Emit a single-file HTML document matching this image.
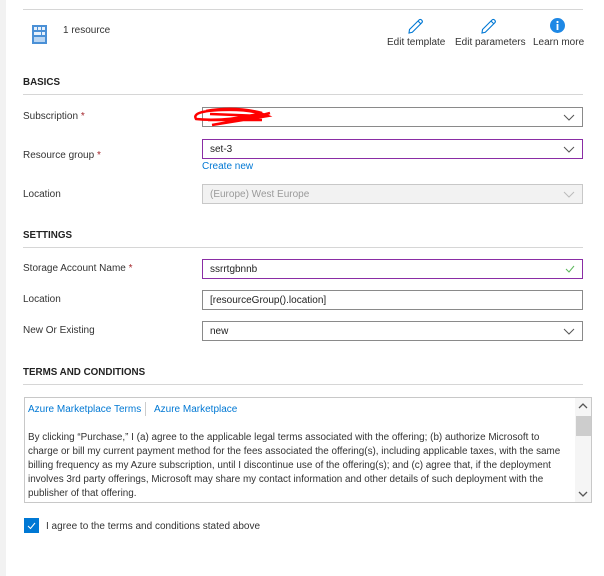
<!DOCTYPE html>
<html><head><style>
*{margin:0;padding:0;box-sizing:border-box}
body{width:604px;height:576px;background:#fff;font-family:"Liberation Sans",sans-serif;font-size:10px;color:#333;position:relative;overflow:hidden}
.a{position:absolute;white-space:nowrap}
.strip{left:0;top:0;width:6px;height:576px;background:#f2f2f2}
.hr{position:absolute;left:23px;width:560px;height:1px;background:#d6d6d6}
.h{font-weight:bold;font-size:9.8px;color:#222}
.inp{position:absolute;left:202px;width:381px;height:20px;border:1px solid #8a8a8a;background:#fff;padding:4px 7px;font-size:10px;color:#222}
.pur{border-color:#8a2da5}
.dis{background:#f2f2f2;border-color:#c8c8c8;color:#9a9a9a}
.chev{position:absolute;right:7px;top:4px}
.req{color:#a4262c}
.lnk{color:#0078d4}
</style></head><body>
<div class="a strip"></div>
<div class="hr" style="top:9px"></div>
<div class="a" style="left:32px;top:25px;width:15px;height:19px;background:#4a90d6"></div>
<div class="a" style="left:34px;top:27px;width:3px;height:3px;background:#e8f1fb"></div>
<div class="a" style="left:38px;top:27px;width:3px;height:3px;background:#e8f1fb"></div>
<div class="a" style="left:42px;top:27px;width:3px;height:3px;background:#e8f1fb"></div>
<div class="a" style="left:34px;top:32px;width:7px;height:3px;background:#e8f1fb"></div>
<div class="a" style="left:42px;top:32px;width:3px;height:3px;background:#e8f1fb"></div>
<div class="a" style="left:34px;top:37px;width:11px;height:5px;background:#b9d5f2"></div>
<div class="a" style="left:63px;top:25px">1 resource</div>
<svg class="a" style="left:406px;top:17px" width="18" height="18" viewBox="0 0 18 18"><path d="M3 16 L3.5 12.5 L13 3 Q14.5 1.8 15.8 3.2 Q17 4.5 15.8 5.8 L6.3 15.3 Z M12 4 L15 7" fill="none" stroke="#0078d4" stroke-width="1.1"/></svg>
<svg class="a" style="left:479px;top:17px" width="18" height="18" viewBox="0 0 18 18"><path d="M3 16 L3.5 12.5 L13 3 Q14.5 1.8 15.8 3.2 Q17 4.5 15.8 5.8 L6.3 15.3 Z M12 4 L15 7" fill="none" stroke="#0078d4" stroke-width="1.1"/></svg>
<svg class="a" style="left:550px;top:18px" width="15" height="15" viewBox="0 0 15 15"><circle cx="7.5" cy="7.5" r="7.5" fill="#1e88e5"/><rect x="6.6" y="6" width="1.8" height="6" fill="#fff"/><circle cx="7.5" cy="4" r="1.1" fill="#fff"/></svg>
<div class="a" style="left:387px;top:37px">Edit template</div>
<div class="a" style="left:455px;top:37px">Edit parameters</div>
<div class="a" style="left:533px;top:37px">Learn more</div>

<div class="a h" style="left:23px;top:77px">BASICS</div>
<div class="hr" style="top:94px"></div>
<div class="a" style="left:23px;top:111px">Subscription <span class="req">*</span></div>
<div class="inp" style="top:107px"><svg class="chev" width="12" height="10"><path d="M1 3 L6 8 L11 3" fill="none" stroke="#555" stroke-width="1"/></svg></div>
<svg class="a" style="left:190px;top:104px" width="86" height="26"><path d="M16 7 Q45 2 72 9 Q35 18 6 15 Q1 7 32 6 Q62 5 78 12 L22 21 Q62 14 80 9 M20 10 L70 12 M18 16 L72 16" fill="none" stroke="#f00" stroke-width="2.5"/></svg>
<div class="a" style="left:23px;top:150px">Resource group <span class="req">*</span></div>
<div class="inp pur" style="top:139px">set-3<svg class="chev" width="12" height="10"><path d="M1 3 L6 8 L11 3" fill="none" stroke="#555" stroke-width="1"/></svg></div>
<div class="a lnk" style="left:202px;top:161px">Create new</div>
<div class="a" style="left:23px;top:189px">Location</div>
<div class="inp dis" style="top:184px">(Europe) West Europe<svg class="chev" width="12" height="10"><path d="M1 3 L6 8 L11 3" fill="none" stroke="#bbb" stroke-width="1"/></svg></div>

<div class="a h" style="left:23px;top:230px">SETTINGS</div>
<div class="hr" style="top:247px"></div>
<div class="a" style="left:23px;top:263px">Storage Account Name <span class="req">*</span></div>
<div class="inp pur" style="top:259px">ssrrtgbnnb<svg class="chev" width="10" height="10"><path d="M1 5 L4 8 L9 2" fill="none" stroke="#5bb85b" stroke-width="1"/></svg></div>
<div class="a" style="left:23px;top:294px">Location</div>
<div class="inp" style="top:290px">[resourceGroup().location]</div>
<div class="a" style="left:23px;top:325px">New Or Existing</div>
<div class="inp" style="top:321px">new<svg class="chev" width="12" height="10"><path d="M1 3 L6 8 L11 3" fill="none" stroke="#555" stroke-width="1"/></svg></div>

<div class="a h" style="left:23px;top:367px">TERMS AND CONDITIONS</div>
<div class="hr" style="top:384px"></div>
<div class="a" style="left:24px;top:397px;width:568px;height:106px;border:1px solid #c8c8c8"></div>
<div class="a lnk" style="left:28px;top:404px">Azure Marketplace Terms</div>
<div class="a" style="left:145px;top:402px;width:1px;height:14px;background:#ccc"></div>
<div class="a lnk" style="left:154px;top:404px">Azure Marketplace</div>
<div class="a" style="left:28px;top:431px;width:543px;white-space:normal;line-height:14px;font-size:9.9px">By clicking “Purchase,” I (a) agree to the applicable legal terms associated with the offering; (b) authorize Microsoft to charge or bill my current payment method for the fees associated the offering(s), including applicable taxes, with the same billing frequency as my Azure subscription, until I discontinue use of the offering(s); and (c) agree that, if the deployment involves 3rd party offerings, Microsoft may share my contact information and other details of such deployment with the publisher of that offering.</div>
<div class="a" style="left:575px;top:398px;width:16px;height:104px;background:#f5f5f5"></div>
<div class="a" style="left:576px;top:416px;width:15px;height:20px;background:#cdcdcd"></div>
<svg class="a" style="left:578px;top:402px" width="10" height="8"><path d="M1 6 L5 2 L9 6" fill="none" stroke="#555" stroke-width="1.3"/></svg>
<svg class="a" style="left:578px;top:490px" width="10" height="8"><path d="M1 2 L5 6 L9 2" fill="none" stroke="#555" stroke-width="1.3"/></svg>

<div class="a" style="left:24px;top:518px;width:15px;height:15px;background:#0078d4"></div>
<svg class="a" style="left:27px;top:521px" width="9" height="9"><path d="M1 5 L3.5 7.5 L8 2" fill="none" stroke="#fff" stroke-width="1"/></svg>
<div class="a" style="left:46px;top:521px">I agree to the terms and conditions stated above</div>
</body></html>
